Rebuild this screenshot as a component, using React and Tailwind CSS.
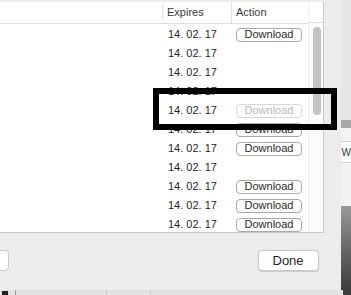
const rows = [
  { date: "14. 02. 17", action: "on" },
  { date: "14. 02. 17" },
  { date: "14. 02. 17" },
  { date: "14. 02. 17" },
  { date: "14. 02. 17", action: "off" },
  { date: "14. 02. 17", action: "on" },
  { date: "14. 02. 17", action: "on" },
  { date: "14. 02. 17" },
  { date: "14. 02. 17", action: "on" },
  { date: "14. 02. 17", action: "on" },
  { date: "14. 02. 17", action: "on" },
];

function DownloadButton({ disabled }) {
  return (
    <div
      className={
        "flex h-[14px] w-[66px] items-center justify-center rounded-[4px] border bg-white text-[11px] leading-none " +
        (disabled ? "border-[#d8d8d8] text-[#b8b8b8]" : "border-[#a9a9a9] text-[#2a2a2a]")
      }
    >
      Download
    </div>
  );
}

function App() {
  return (
    <div
      className="relative flex h-[295px] w-[351px] flex-col overflow-hidden bg-[#dcdcdc]"
      style={{ fontFamily: '"Liberation Sans", Arial, sans-serif' }}
    >
      <div className="flex h-[290px]">
        {/* dialog */}
        <div className="flex h-[290px] w-[343px] flex-col bg-[#ececec] shadow-[1px_1px_3px_rgba(0,0,0,0.35)]">
          <div className="mt-[2px] flex h-[231px] w-[324px] overflow-hidden border-r border-b border-[#c9c9c9] bg-white">
            <div className="flex w-[308px] flex-col">
              {/* header */}
              <div className="flex h-[22px] shrink-0 border-b border-[#dcdcdc] text-[11px] text-[#3a3a3a]">
                <div className="my-[3px] w-[163px] border-r border-[#e2e2e2]" />
                <div className="flex w-[69px] items-center border-r border-[#e2e2e2] pl-[4px]">Expires</div>
                <div className="flex w-[76px] items-center pl-[4px]">Action</div>
              </div>
              {/* body */}
              <div className="mt-[1px] flex flex-col">
                {rows.map((r, i) => (
                  <div key={i} className="flex h-[19px] items-center text-[11px] text-[#1e1e1e]">
                    <div className="w-[168px]" />
                    <div className="w-[68px]">{r.date}</div>
                    {r.action && <DownloadButton disabled={r.action === "off"} />}
                  </div>
                ))}
              </div>
            </div>
            {/* scroller */}
            <div className="flex w-[15px] flex-col border-l border-[#ececec] bg-[#fbfbfb]">
              <div className="h-[21px] border-b border-[#dcdcdc] bg-white" />
              <div className="ml-[4px] mt-[4px] h-[88px] w-[8px] rounded-full bg-[#c2c2c2]" />
            </div>
          </div>
          <div className="mt-[17px] flex items-center justify-between">
            <div className="ml-[-40px] h-[21px] w-[49px] rounded-[4px] border border-[#c8c8c8] bg-white" />
            <div className="mr-[22px] flex h-[21px] w-[61px] items-center justify-center rounded-[4px] border border-[#c8c8c8] bg-white text-[13px] text-[#1e1e1e] shadow-[0_0.5px_1px_rgba(0,0,0,0.15)]">
              Done
            </div>
          </div>
        </div>
        {/* background app on the right */}
        <div className="flex flex-1 flex-col">
          <div className="h-[120px] bg-[#e6e6e6]" />
          <div className="h-[8px] bg-[#a8a8a8]" />
          <div className="h-[14px] border-b border-[#cfcfcf] bg-[#f4f4f4]" />
          <div className="flex h-[20px] items-center bg-white pl-[1px] text-[10px] text-[#333]">W</div>
          <div className="h-[44px] border-t border-[#d5d5d5] bg-[#f2f2f2]" />
          <div className="flex-1 bg-gradient-to-b from-[#9a9a9a] to-[#3c3c3c]" />
        </div>
      </div>
      <div className="flex h-[5px] items-center bg-[#e2e2e2]">
        <div className="ml-[2px] h-[4px] w-[6px] bg-[#222]" />
        <div className="ml-[7px] h-full w-px bg-[#999]" />
        <div className="ml-[90px] h-full w-[45px] border-x border-[#c8c8c8]" />
        <div className="flex-1" />
        <div className="h-full w-[8px] bg-[#3c3c3c]" />
      </div>

      {/* annotation box */}
      <div className="absolute left-[153px] top-[88px] h-[42px] w-[184px] border-[6px] border-black" />
    </div>
  );
}

export default App;
